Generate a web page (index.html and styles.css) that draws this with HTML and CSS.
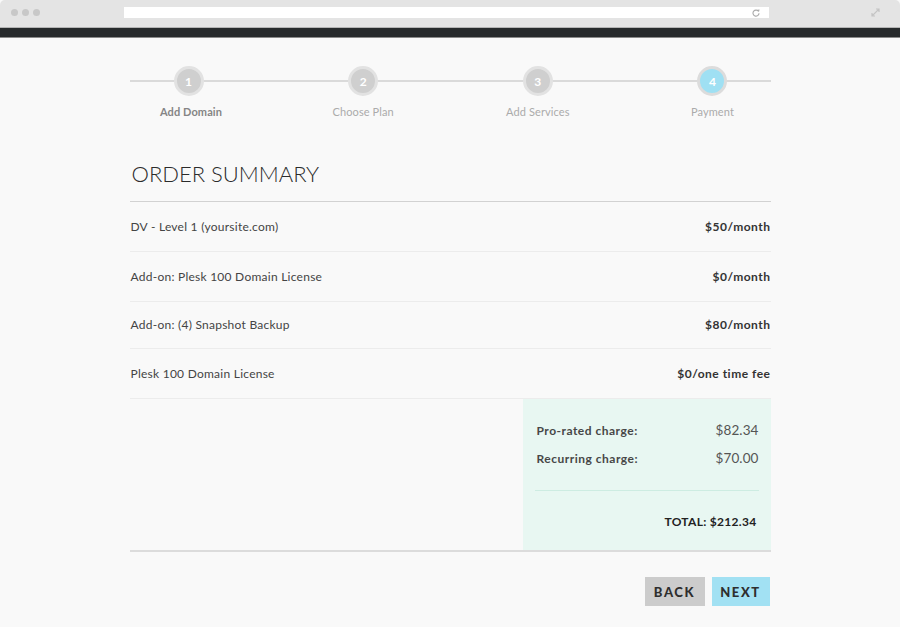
FILE: index.html
```html
<!DOCTYPE html>
<html lang="en">
<head>
<meta charset="utf-8">
<title>Order Summary</title>
<link rel="stylesheet" href="styles.css">
</head>
<body>
<div class="window">
  <div class="chrome">
    <div class="dots"><span class="dot"></span><span class="dot"></span><span class="dot"></span></div>
    <div class="urlbar">
      <svg class="reload" width="8" height="8" viewBox="0 0 8 8"><path d="M6.6 2.6A3 3 0 1 0 7 4.2" fill="none" stroke="#aaa" stroke-width="1.1"/><path d="M5.2 0.8L7 2.8L7.6 0.6Z" fill="#aaa"/></svg>
    </div>
    <svg class="expand" width="9" height="9" viewBox="0 0 9 9"><path d="M1 8L8 1M5 1H8V4M1 5V8H4" fill="none" stroke="#c4c4c4" stroke-width="1.2"/></svg>
  </div>
  <div class="topbar"></div>
  <main class="page">
    <div class="container">
      <div class="stepper">
        <div class="step step--done">
          <div class="circle">1</div>
          <div class="label">Add Domain</div>
        </div>
        <div class="step">
          <div class="circle">2</div>
          <div class="label">Choose Plan</div>
        </div>
        <div class="step">
          <div class="circle">3</div>
          <div class="label">Add Services</div>
        </div>
        <div class="step step--active">
          <div class="circle">4</div>
          <div class="label">Payment</div>
        </div>
      </div>

      <h1 class="title">ORDER SUMMARY</h1>

      <div class="items">
        <div class="row"><span class="name">DV - Level 1 (yoursite.com)</span><span class="price">$50/month</span></div>
        <div class="row"><span class="name">Add-on: Plesk 100 Domain License</span><span class="price">$0/month</span></div>
        <div class="row row--short"><span class="name">Add-on: (4) Snapshot Backup</span><span class="price">$80/month</span></div>
        <div class="row"><span class="name">Plesk 100 Domain License</span><span class="price">$0/one time fee</span></div>
      </div>

      <div class="totals">
        <div class="summary">
          <div class="charge"><span class="charge-label">Pro-rated charge:</span><span class="amount">$82.34</span></div>
          <div class="charge"><span class="charge-label">Recurring charge:</span><span class="amount">$70.00</span></div>
          <div class="divider"></div>
          <div class="total">TOTAL: $212.34</div>
        </div>
      </div>

      <div class="actions">
        <button class="btn btn--back">BACK</button>
        <button class="btn btn--next">NEXT</button>
      </div>
    </div>
  </main>
</div>
</body>
</html>
```
FILE: styles.css
```css
* { box-sizing: border-box; }

html, body {
  margin: 0;
  padding: 0;
  background: #ffffff;
  font-family: "Lato", "Open Sans", sans-serif;
}

.window {
  width: 900px;
  height: 627px;
  display: flex;
  flex-direction: column;
  background: #f9f9f9;
}

.chrome {
  height: 28px;
  background: #e4e4e4;
  border-radius: 5px 5px 0 0;
  border-bottom: 1px solid #b4b4b4;
  display: flex;
  align-items: flex-start;
  padding-top: 7px;
}

.dots {
  display: flex;
  gap: 4px;
  padding-left: 11px;
  padding-top: 2px;
  width: 124px;
}

.dot {
  width: 7px;
  height: 7px;
  border-radius: 50%;
  background: #c8c8c8;
}

.urlbar {
  width: 645px;
  height: 11px;
  background: #ffffff;
  display: flex;
  align-items: center;
  justify-content: flex-end;
  padding-right: 9px;
}

.reload { display: block; }

.expand {
  display: block;
  margin-left: 102px;
  margin-top: 1px;
}

.topbar {
  height: 10px;
  background: #272a2c;
  border-bottom: 1px solid #8a8a8a;
}

.page {
  flex: 1;
  background: #f9f9f9;
}

.container {
  width: 641px;
  margin: 0 auto;
  padding-top: 28px;
}

/* stepper */
.stepper {
  display: flex;
  justify-content: space-between;
  padding: 0 18px 0 19px;
  background: linear-gradient(#dadada, #dadada) no-repeat 0 14px / 100% 2px;
}

.step {
  width: 80px;
  display: flex;
  flex-direction: column;
  align-items: center;
}

.circle {
  width: 30px;
  height: 30px;
  border-radius: 50%;
  background: #cfcfcf;
  border: 3px solid #e2e2e2;
  color: #ffffff;
  font-size: 12px;
  font-weight: 700;
  display: flex;
  align-items: center;
  justify-content: center;
}

.step--active .circle {
  background: #9fe0f3;
  border-color: #dcdcdc;
}

.label {
  margin-top: 9px;
  font-size: 11px;
  line-height: 14px;
  letter-spacing: 0.1px;
  color: #ababab;
  white-space: nowrap;
}

.step--done .label {
  color: #858585;
  font-weight: 700;
  margin-left: 5px;
}

/* title */
.title {
  margin: 40px 0 0 0;
  padding: 0 0 12px 2px;
  font-size: 22px;
  line-height: 30px;
  font-weight: 300;
  letter-spacing: 0;
  color: #2b2b2b;
  border-bottom: 1px solid #d2d2d2;
}

/* rows */
.row {
  height: 50px;
  border-bottom: 1px solid #ececec;
  display: flex;
  align-items: center;
  justify-content: space-between;
  padding: 0 0 1px 1px;
  font-size: 12px;
  letter-spacing: 0.25px;
  color: #444444;
}

.row--short { height: 47px; }

.price {
  font-weight: 700;
  color: #333333;
  letter-spacing: 0.5px;
}

/* totals */
.totals {
  display: flex;
  justify-content: flex-end;
  border-bottom: 2px solid #dcdcdc;
}

.summary {
  width: 248px;
  background: #e8f7f2;
  padding: 23px 12px 20px 12px;
}

.charge {
  display: flex;
  justify-content: space-between;
  align-items: center;
  height: 16px;
  padding-left: 2px;
}

.charge + .charge { margin-top: 12px; }

.charge-label {
  font-size: 12px;
  font-weight: 700;
  letter-spacing: 0.5px;
  color: #474747;
}

.amount {
  font-size: 13.5px;
  color: #555555;
  letter-spacing: 0.1px;
}

.divider {
  height: 1px;
  background: #cdece2;
  margin: 24px 0 23px;
}

.total {
  text-align: right;
  font-size: 12px;
  line-height: 16px;
  font-weight: 700;
  letter-spacing: 0.3px;
  color: #222222;
  padding-right: 2px;
}

/* actions */
.actions {
  display: flex;
  justify-content: flex-end;
  gap: 7px;
  margin-top: 25px;
  padding-right: 1px;
}

.btn {
  height: 29px;
  border: none;
  padding: 0;
  font-family: "Lato", sans-serif;
  font-size: 13px;
  font-weight: 900;
  letter-spacing: 1.6px;
  color: #2e2e2e;
  cursor: pointer;
}

.btn--back {
  width: 60px;
  background: #cccccc;
}

.btn--next {
  width: 58px;
  background: #a2e1f3;
}
```
